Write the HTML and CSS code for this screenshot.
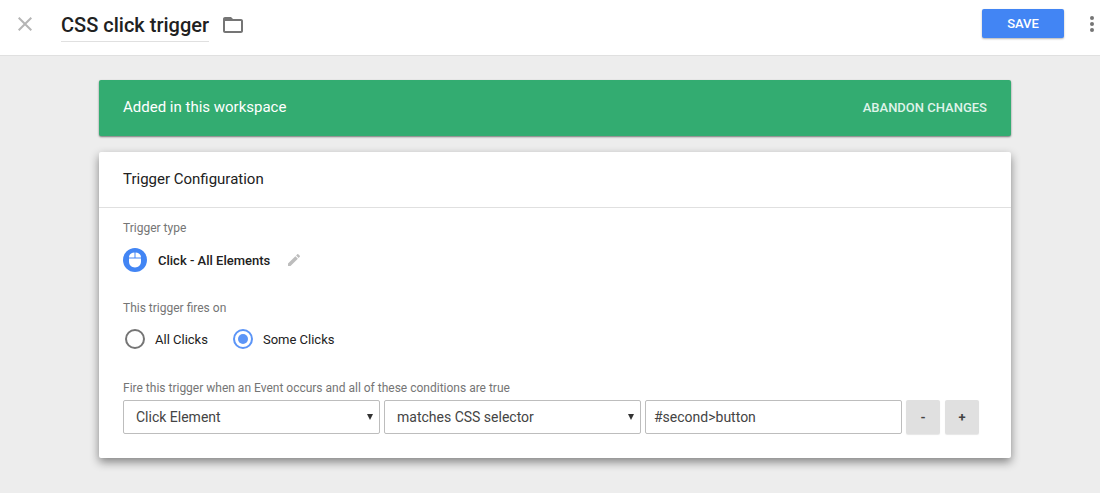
FILE: index.html
```html
<!DOCTYPE html>
<html lang="en">

<head>
    <meta charset="UTF-8">
    <meta name="viewport" content="width=device-width, initial-scale=1.0">
    <title>CSS click trigger</title>
    <link rel="stylesheet" href="styles.css">
</head>

<body>
    <header class="header">
        <button type="button" class="icon-button close-button" aria-label="Close">
            <svg width="14" height="14" viewBox="0 0 14 14">
                <path d="M0.7 0.7 L13.3 13.3 M13.3 0.7 L0.7 13.3" stroke="#b5b5b5" stroke-width="2" />
            </svg>
        </button>
        <h1 class="title">CSS click trigger</h1>
        <button type="button" class="icon-button folder-button" aria-label="Move to folder">
            <svg width="24" height="24" viewBox="0 0 24 24" fill="#757575">
                <path d="M20 6h-8l-2-2H4c-1.100 0-1.990.9-1.990 2L2 18c0 1.100.9 2 2 2h16c1.100 0 2-.9 2-2V8c0-1.100-.9-2-2-2zm0 12H4V8h16v10z" />
            </svg>
        </button>
        <button type="button" class="save-button">SAVE</button>
        <button type="button" class="icon-button" aria-label="More actions">
            <svg width="4" height="16" viewBox="0 0 4 16" fill="#757575">
                <circle cx="2" cy="2" r="2" />
                <circle cx="2" cy="8" r="2" />
                <circle cx="2" cy="14" r="2" />
            </svg>
        </button>
    </header>

    <main class="content">
        <div class="banner">
            <span class="banner-text">Added in this workspace</span>
            <button type="button" class="abandon-button">ABANDON CHANGES</button>
        </div>

        <section class="card">
            <h2 class="card-header">Trigger Configuration</h2>
            <div class="card-body">
                <div class="field">
                    <div class="field-label">Trigger type</div>
                    <div class="type-row">
                        <svg width="24" height="24" viewBox="0 0 24 24">
                            <circle cx="12" cy="12" r="12" fill="#4285f4" />
                            <path d="M11.500 4.500 V9.500 H6 C6 6.500 8.300 4.600 11.500 4.500 Z M12.500 4.500 V9.500 H18 C18 6.500 15.700 4.600 12.500 4.500 Z M6 10.500 H18 V13.500 C18 17 15.500 19.400 12 19.400 C8.500 19.400 6 17 6 13.500 Z" fill="#fff" />
                        </svg>
                        <span class="type-name">Click - All Elements</span>
                        <button type="button" class="icon-button" aria-label="Edit trigger type">
                            <svg width="16" height="16" viewBox="0 0 24 24" fill="#bdbdbd">
                                <path d="M3 17.250V21h3.750L17.810 9.940l-3.750-3.750L3 17.250zM20.710 7.040c.39-.39.39-1.020 0-1.410l-2.340-2.340c-.39-.39-1.020-.39-1.410 0l-1.830 1.830 3.750 3.750 1.830-1.830z" />
                            </svg>
                        </button>
                    </div>
                </div>

                <div class="field" role="radiogroup" aria-labelledby="fires-label">
                    <div class="field-label" id="fires-label">This trigger fires on</div>
                    <div class="radio-row">
                        <label class="radio"><input type="radio" name="fires-on">All Clicks</label>
                        <label class="radio"><input type="radio" name="fires-on" checked>Some Clicks</label>
                    </div>
                </div>

                <div class="field-label">Fire this trigger when an Event occurs and all of these conditions are true</div>
                <div class="condition">
                    <div class="select">
                        <select aria-label="Variable">
                            <option>Click Element</option>
                        </select>
                    </div>
                    <div class="select">
                        <select aria-label="Operator">
                            <option>matches CSS selector</option>
                        </select>
                    </div>
                    <input type="text" class="value" aria-label="Value" value="#second&gt;button">
                    <div class="condition-buttons">
                        <button type="button" class="square-button" aria-label="Remove condition">-</button>
                        <button type="button" class="square-button" aria-label="Add condition">+</button>
                    </div>
                </div>
            </div>
        </section>
    </main>
</body>

</html>
```
FILE: styles.css
```css
* {
    box-sizing: border-box;
}

body {
    margin: 0;
    font-family: Roboto, Arial, sans-serif;
    font-size: 13px;
    color: #212121;
    background-color: #ededed;
}

button,
input,
select {
    font-family: inherit;
    margin: 0;
}

button {
    border: none;
    padding: 0;
    cursor: pointer;
}

svg {
    display: block;
}

/* Header */
.header {
    display: flex;
    align-items: flex-start;
    padding: 9px 6px 13px 18px;
    background-color: #fff;
    border-bottom: 1px solid #e0e0e0;
}

.icon-button {
    background: none;
}

.header .icon-button {
    display: flex;
    align-items: center;
    height: 30px;
}

.header .folder-button {
    height: 32px;
}

.close-button {
    margin-right: 29px;
}

.title {
    margin: 0 12px 0 0;
    border-bottom: 1px solid #e0e0e0;
    font-size: 20px;
    font-weight: 500;
    line-height: 32px;
}

.save-button {
    width: 82px;
    height: 29px;
    margin: 0 26px 0 auto;
    border-radius: 2px;
    background-color: #4285f4;
    color: #fff;
    font-size: 13px;
    font-weight: 500;
    box-shadow: 0 1px 2px rgba(0, 0, 0, 0.3);
}

/* Content */
.content {
    padding: 24px 89px 24px 99px;
}

.banner {
    display: flex;
    align-items: center;
    justify-content: space-between;
    height: 56px;
    margin-bottom: 16px;
    padding: 0 24px 2px;
    border-radius: 2px;
    background-color: #33ac71;
    box-shadow: 0 1px 2px rgba(0, 0, 0, 0.5);
}

.banner-text {
    color: #fff;
    font-size: 15px;
}

.abandon-button {
    background: none;
    color: #dff3e9;
    font-size: 13px;
    font-weight: 500;
}

.card {
    border-radius: 2px;
    background-color: #fff;
    box-shadow: 0 4px 10px rgba(0, 0, 0, 0.45);
}

.card-header {
    margin: 0;
    padding: 0 24px;
    border-bottom: 1px solid #e0e0e0;
    font-size: 15px;
    font-weight: 400;
    line-height: 55px;
}

.card-body {
    padding: 12px 24px 24px;
}

.field {
    margin-bottom: 28px;
}

.field-label {
    color: #757575;
    font-size: 12px;
    line-height: 16px;
}

.type-row {
    display: flex;
    align-items: center;
    margin-top: 12px;
}

.type-name {
    margin: 0 16px 0 11px;
    font-weight: 500;
}

.radio-row {
    display: flex;
    gap: 25px;
    margin-top: 12px;
    padding: 0 2px 2px;
}

.radio {
    display: flex;
    align-items: center;
    gap: 10px;
    height: 22px;
}

.radio input {
    appearance: none;
    display: grid;
    place-items: center;
    width: 20px;
    height: 20px;
    border: 2px solid #757575;
    border-radius: 50%;
}

.radio input:checked {
    border-color: #5c95f7;
}

.radio input:checked::before {
    content: "";
    width: 10px;
    height: 10px;
    border-radius: 50%;
    background-color: #5c95f7;
}

/* Condition row */
.condition {
    display: grid;
    grid-template-columns: 1fr 1fr 1fr auto;
    gap: 4px;
    margin-top: 4px;
    padding-right: 8px;
}

.select {
    position: relative;
}

.select::after {
    content: "";
    position: absolute;
    top: 14px;
    right: 7px;
    border: 3px solid transparent;
    border-top: 6px solid #333;
    border-bottom: none;
    pointer-events: none;
}

.select select,
.value {
    width: 100%;
    min-width: 0;
    height: 34px;
    border: 1px solid #bdbdbd;
    border-radius: 2px;
    background-color: #fff;
    color: #444;
    font-size: 14px;
}

.select select {
    appearance: none;
    padding: 0 20px 0 12px;
}

.value {
    padding: 0 8px;
}

.condition-buttons {
    display: flex;
    gap: 5px;
}

.square-button {
    width: 34px;
    height: 34px;
    border-radius: 2px;
    background-color: #e0e0e0;
    color: #444;
    font-size: 13px;
    font-weight: 700;
    box-shadow: 0 1px 1px rgba(0, 0, 0, 0.1);
}
```
